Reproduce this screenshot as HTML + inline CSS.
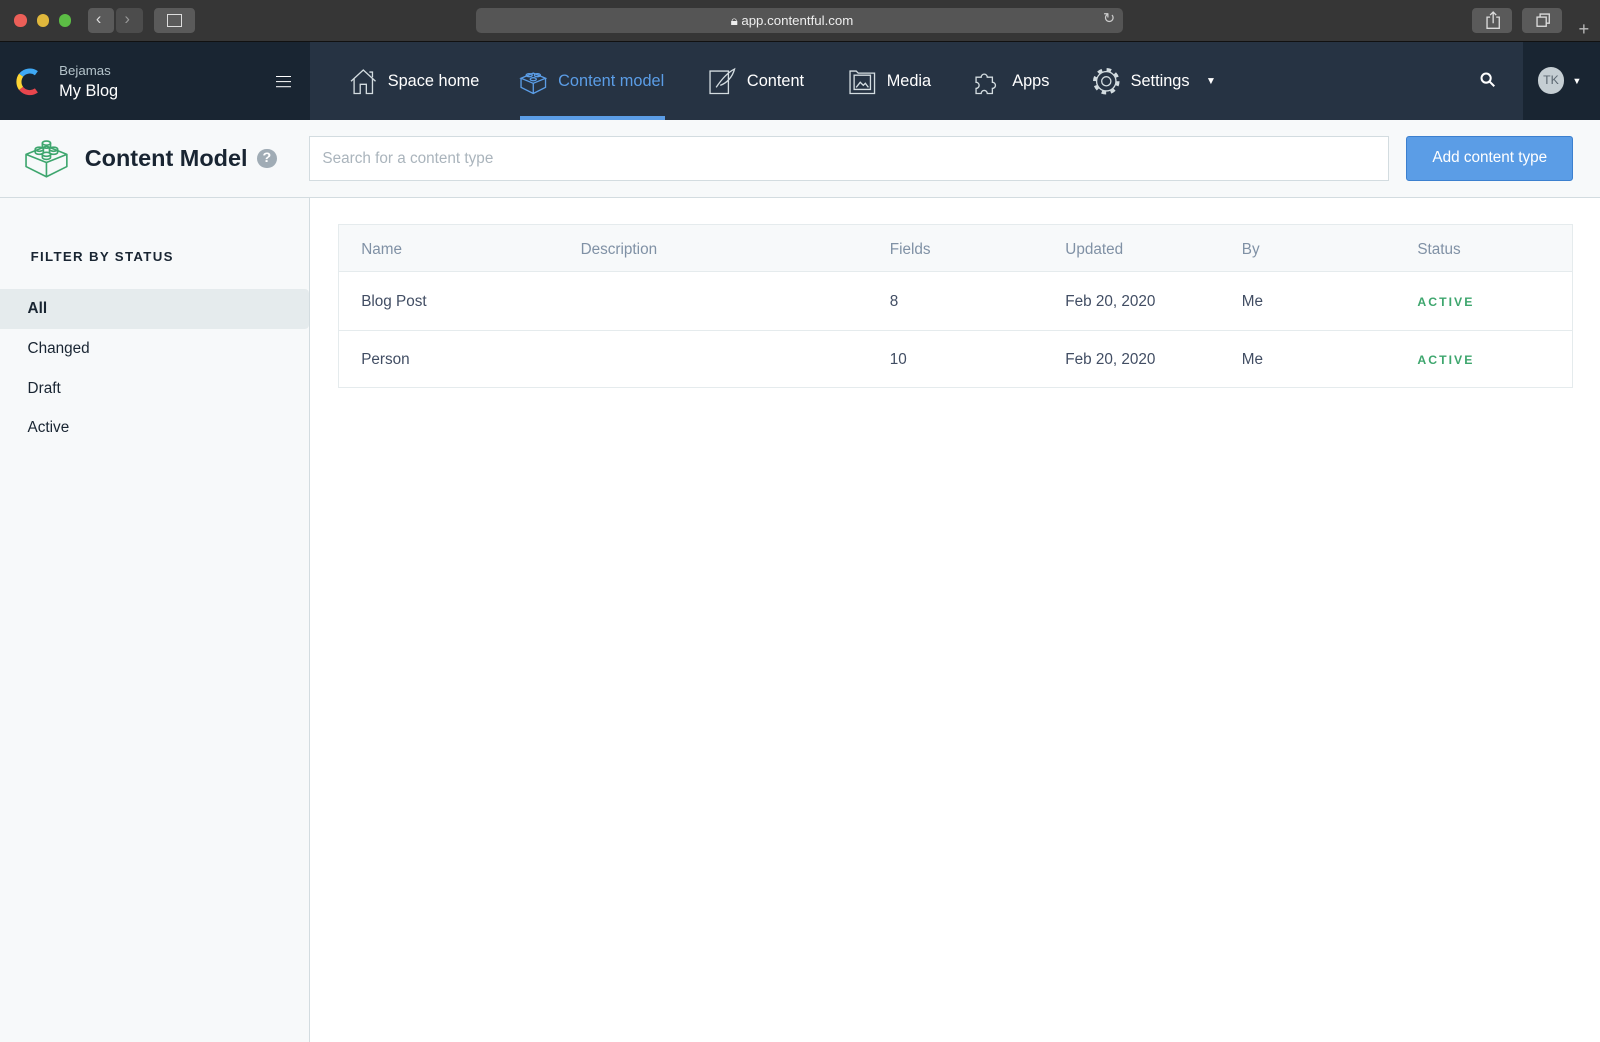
<!DOCTYPE html>
<html><head><meta charset="utf-8"><style>
*{box-sizing:border-box;margin:0;padding:0}
html,body{width:1600px;height:1042px;overflow:hidden;background:#fff}
#w{zoom:1.0204;width:1568px;height:1022px;position:relative;font-family:"Liberation Sans",sans-serif;overflow:hidden}
.a{position:absolute}
.chrome{left:0;top:0;width:1568px;height:41px;background:#363636;border-bottom:1px solid #111}
.dot{width:12px;height:12px;border-radius:50%;top:14px}
.btn{background:#5a5a5a;border-radius:4px;height:24px;top:8px}
.nav{left:0;top:41px;width:1568px;height:77px;background:#263343}
.side{left:0;top:41px;width:304px;height:77px;background:#192532}
.ni{top:41px;height:77px;display:flex;align-items:center;color:#fff;font-size:16px;gap:10px}
.ni svg{stroke:#d3dce0;fill:none;stroke-width:1.3}
.hdr{left:0;top:118px;width:1568px;height:76px;background:#f7f9fa;border-bottom:1px solid #d3dce0}
.lp{left:0;top:194px;width:304px;height:828px;background:#f7f9fa;border-right:1px solid #d3dce0}
.f{left:27px;font-size:15px;color:#192532}
.tb{left:331px;top:220px;width:1211px;height:160px;border:1px solid #e5ebed}
.tr{position:absolute;left:0;width:100%;border-bottom:1px solid #e5ebed;font-size:15px;color:#414d63}
.tr span{position:absolute}
.st{color:#3ea66e;font-weight:bold;font-size:12px;letter-spacing:2px}
</style></head><body><div id="w">
<div class="a chrome"></div>
<div class="a dot" style="left:14px;background:#ec5f58"></div>
<div class="a dot" style="left:36px;background:#e0b73c"></div>
<div class="a dot" style="left:58px;background:#5cbd45"></div>
<div class="a btn" style="left:86px;width:26px"></div><div class="a btn" style="left:114px;width:26px;background:#4c4c4c"></div>
<div class="a" style="left:94px;top:10px;color:#ddd;font-size:16px">&#8249;</div><div class="a" style="left:122px;top:10px;color:#999;font-size:16px">&#8250;</div>
<div class="a btn" style="left:151px;width:40px"></div>
<div class="a" style="left:164px;top:14px;width:14px;height:12px;border:1.5px solid #ddd"></div>
<div class="a btn" style="left:466px;width:635px;background:#555;border-radius:5px"></div>
<div class="a" style="left:716px;top:13px;color:#eee;font-size:13px">&#128274;&#xFE0E; app.contentful.com</div>
<div class="a" style="left:1081px;top:11px;color:#ccc;font-size:14px">&#8635;</div>
<div class="a btn" style="left:1443px;width:39px"></div><div class="a btn" style="left:1492px;width:39px"></div>
<svg class="a" style="left:1455px;top:11px" width="16" height="18" viewBox="0 0 16 18" fill="none" stroke="#ddd" stroke-width="1.3"><path d="M5 6H2v11h12V6h-3M8 12V1M5 4l3-3 3 3"/></svg>
<svg class="a" style="left:1504px;top:12px" width="16" height="16" viewBox="0 0 16 16" fill="none" stroke="#ddd" stroke-width="1.3"><rect x="2" y="5" width="9" height="9"/><path d="M5 5V2h9v9h-3"/></svg>
<div class="a" style="left:1547px;top:18px;color:#bbb;font-size:18px">+</div>
<div class="a nav"></div><div class="a side"></div>
<div class="a" style="left:1493px;top:41px;width:75px;height:77px;background:#192532"></div>
<svg class="a" style="left:16px;top:65px" width="26" height="30" viewBox="0 0 26 30"><path d="M20 7A11 11 0 0 0 5 9" stroke="#3fa9f5" stroke-width="5" fill="none"/><path d="M5 9A11 11 0 0 0 5 22" stroke="#fdd434" stroke-width="5" fill="none"/><path d="M5 22A11 11 0 0 0 20 24" stroke="#e8464d" stroke-width="5" fill="none"/></svg>
<div class="a" style="left:58px;top:62px;color:#b4c3ca;font-size:13px">Bejamas</div>
<div class="a" style="left:58px;top:80px;color:#fff;font-size:16px">My Blog</div>
<div class="a" style="left:270px;top:74px;width:15px;height:1.5px;background:#fff;box-shadow:0 5px 0 #fff,0 10px 0 #fff"></div>
<div class="a ni" style="left:342px"><svg width="28" height="28" viewBox="0 0 28 28"><path d="M2 14L14 3l12 11M5 11v15h6v-9h6v9h6V11M20 5h3v5"/></svg>Space home</div>
<div class="a ni" style="left:509px;color:#5b9de6"><svg width="28" height="28" viewBox="0 0 28 28" style="stroke:#5b9de6"><path d="M2 11l12-5 12 5-12 5zM2 11v9l12 6 12-6v-9M14 16v10"/><ellipse cx="10" cy="8" rx="3" ry="1.5"/><ellipse cx="18" cy="8" rx="3" ry="1.5"/><ellipse cx="14" cy="12" rx="3" ry="1.5"/></svg>Content model</div>
<div class="a" style="left:510px;top:114px;width:142px;height:4px;background:#5b9de6"></div>
<div class="a ni" style="left:694px"><svg width="28" height="28" viewBox="0 0 28 28"><path d="M2 4h18v22H2zM8 20c4-6 10-14 18-18-2 8-8 14-14 16"/></svg>Content</div>
<div class="a ni" style="left:831px"><svg width="28" height="28" viewBox="0 0 28 28"><path d="M2 4h6l2 2h16v20H2zM6 8h16v14H6zM8 20l4-5 3 3 2-2 3 4"/></svg>Media</div>
<div class="a ni" style="left:954px"><svg width="28" height="28" viewBox="0 0 28 28"><path d="M3 10h5a3 3 0 1 1 6 0h5v5a3 3 0 1 1 0 6v5h-5a3 3 0 1 0-6 0H3v-5a3 3 0 1 0 0-6z"/></svg>Apps</div>
<div class="a ni" style="left:1070px"><svg width="28" height="28" viewBox="0 0 28 28"><circle cx="14" cy="14" r="4.5"/><circle cx="14" cy="14" r="9.5"/><circle cx="14" cy="14" r="11.5" stroke-width="3" stroke-dasharray="4.5 4.53"/></svg>Settings <span style="font-size:10px;margin-left:6px">&#9660;</span></div>
<svg class="a" style="left:1450px;top:71px" width="16" height="16" viewBox="0 0 16 16"><circle cx="6" cy="6" r="4.5" stroke="#fff" stroke-width="2" fill="none"/><path d="M9.5 9.5L14 14" stroke="#fff" stroke-width="2"/></svg>
<div class="a" style="left:1507px;top:66px;width:26px;height:26px;border-radius:50%;background:#c5ced3;color:#5a6670;font-size:12px;text-align:center;line-height:26px">TK</div>
<div class="a" style="left:1541px;top:74px;color:#fff;font-size:9px">&#9660;</div>
<div class="a hdr"></div>
<svg class="a" style="left:24px;top:135px" width="44" height="40" viewBox="0 0 44 40" fill="none" stroke="#3ea66e" stroke-width="1.6" stroke-linejoin="round"><path d="M2 16l20-8 20 8-20 8zM2 16v12l20 10 20-10V16M22 24v14"/><path d="M11 11v3a4 2 0 0 0 8 0v-3M25 11v3a4 2 0 0 0 8 0v-3M18 5v3a4 2 0 0 0 8 0V5M18 16v3a4 2 0 0 0 8 0v-3"/><ellipse cx="15" cy="11" rx="4" ry="2"/><ellipse cx="29" cy="11" rx="4" ry="2"/><ellipse cx="22" cy="5" rx="4" ry="2"/><ellipse cx="22" cy="16" rx="4" ry="2"/></svg>
<div class="a" style="left:83px;top:142px;font-size:23px;font-weight:bold;color:#192532">Content Model</div>
<div class="a" style="left:252px;top:146px;width:19px;height:19px;border-radius:50%;background:#a0acb5;color:#fff;font-size:14px;font-weight:bold;text-align:center;line-height:19px">?</div>
<div class="a" style="left:303px;top:133px;width:1058px;height:44px;background:#fff;border:1px solid #d3dce0;color:#aab4bc;font-size:15px;padding:13px 12px">Search for a content type</div>
<div class="a" style="left:1378px;top:133px;width:164px;height:44px;background:#5b9de6;border:1px solid #3c80cf;border-radius:3px;color:#fff;font-size:15px;text-align:center;line-height:42px">Add content type</div>
<div class="a lp"></div>
<div class="a" style="left:30px;top:244px;font-size:13px;font-weight:bold;letter-spacing:1.3px;color:#192532">FILTER BY STATUS</div>
<div class="a" style="left:0;top:283px;width:303px;height:39px;background:#e5ebed;border-radius:0 4px 4px 0"></div>
<div class="a f" style="top:294px;font-weight:bold">All</div>
<div class="a f" style="top:333px">Changed</div>
<div class="a f" style="top:372px">Draft</div>
<div class="a f" style="top:411px">Active</div>
<div class="a tb">
<div class="tr" style="top:0;height:46px;background:#f7f9fa;color:#8091a5"><span style="left:22px;top:15px">Name</span><span style="left:237px;top:15px">Description</span><span style="left:540px;top:15px">Fields</span><span style="left:712px;top:15px">Updated</span><span style="left:885px;top:15px">By</span><span style="left:1057px;top:15px">Status</span></div>
<div class="tr" style="top:46px;height:57px"><span style="left:22px;top:20px">Blog Post</span><span style="left:540px;top:20px">8</span><span style="left:712px;top:20px">Feb 20, 2020</span><span style="left:885px;top:20px">Me</span><span class="st" style="left:1057px;top:22px">ACTIVE</span></div>
<div class="tr" style="top:103px;height:56px;border-bottom:0"><span style="left:22px;top:20px">Person</span><span style="left:540px;top:20px">10</span><span style="left:712px;top:20px">Feb 20, 2020</span><span style="left:885px;top:20px">Me</span><span class="st" style="left:1057px;top:22px">ACTIVE</span></div>
</div>
</div></body></html>
